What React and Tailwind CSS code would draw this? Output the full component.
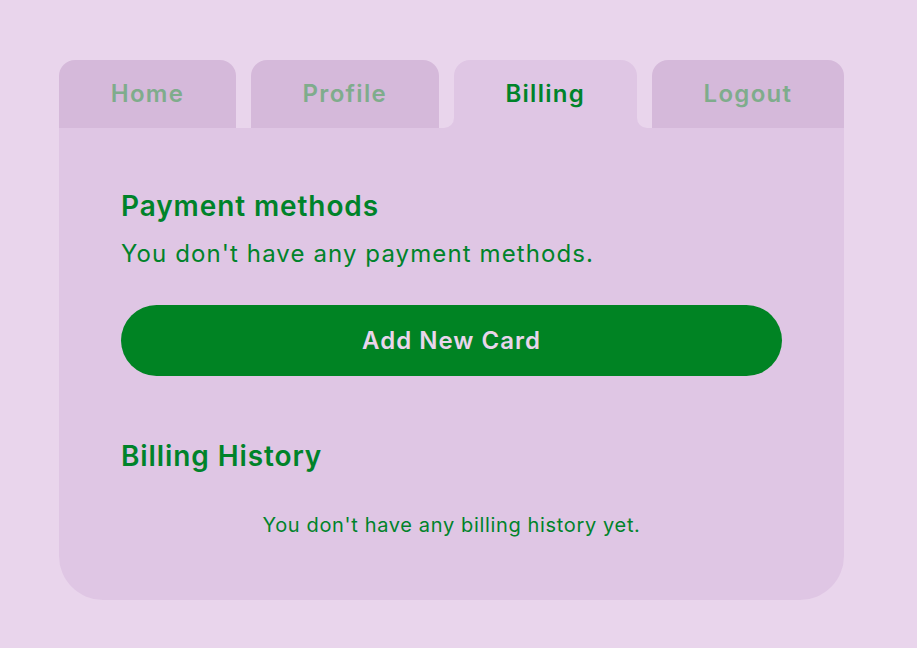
export default function App() {
  const tabs = ["Home", "Profile", "Billing", "Logout"];
  return (
    <div
      className="min-h-[648px] w-full bg-[#e9d5ec] pt-[60px] pl-[59px]"
      style={{ fontFamily: "Inter, 'Noto Sans', sans-serif" }}
    >
      <div className="w-[785px]">
        <div className="flex gap-[15px] h-[68px]">
          {tabs.map((t) => {
            const active = t === "Billing";
            return (
              <div
                key={t}
                className={
                  "relative flex-auto flex items-center justify-center rounded-t-[16px] text-[24px] font-semibold tracking-[1.3px] " +
                  (active ? "bg-[#dfc6e4] text-[#00832a]" : "bg-[#d5b9da] text-[#7fac8c]")
                }
              >
                {t}
                {active && (
                  <>
                    <div className="absolute bottom-0 left-[-10px] w-[10px] h-[10px] bg-[#dfc6e4]">
                      <div className="w-full h-full bg-[#e9d5ec] rounded-br-[10px]" />
                    </div>
                    <div className="absolute bottom-0 right-[-10px] w-[10px] h-[10px] bg-[#dfc6e4]">
                      <div className="w-full h-full bg-[#e9d5ec] rounded-bl-[10px]" />
                    </div>
                  </>
                )}
              </div>
            );
          })}
        </div>
        <div className="bg-[#dfc6e4] rounded-b-[44px] px-[62px] pt-[58px] h-[472px]">
          <h2 className="text-[28px] font-semibold text-[#00832a] leading-[40px] tracking-[0.9px]">Payment methods</h2>
          <p className="text-[24px] text-[#00832a] leading-[32px] mt-[12px] tracking-[1.1px]">You don't have any payment methods.</p>
          <button className="mt-[35px] w-full h-[71px] rounded-full bg-[#008323] text-[#e9d5ec] text-[24px] font-semibold tracking-[1px]">
            Add New Card
          </button>
          <h2 className="mt-[60px] text-[28px] font-semibold text-[#00832a] leading-[40px] tracking-[0.9px]">Billing History</h2>
          <p className="mt-[35px] text-center text-[20px] text-[#00832a] leading-[28px] tracking-[0.65px]">
            You don't have any billing history yet.
          </p>
        </div>
      </div>
    </div>
  );
}
